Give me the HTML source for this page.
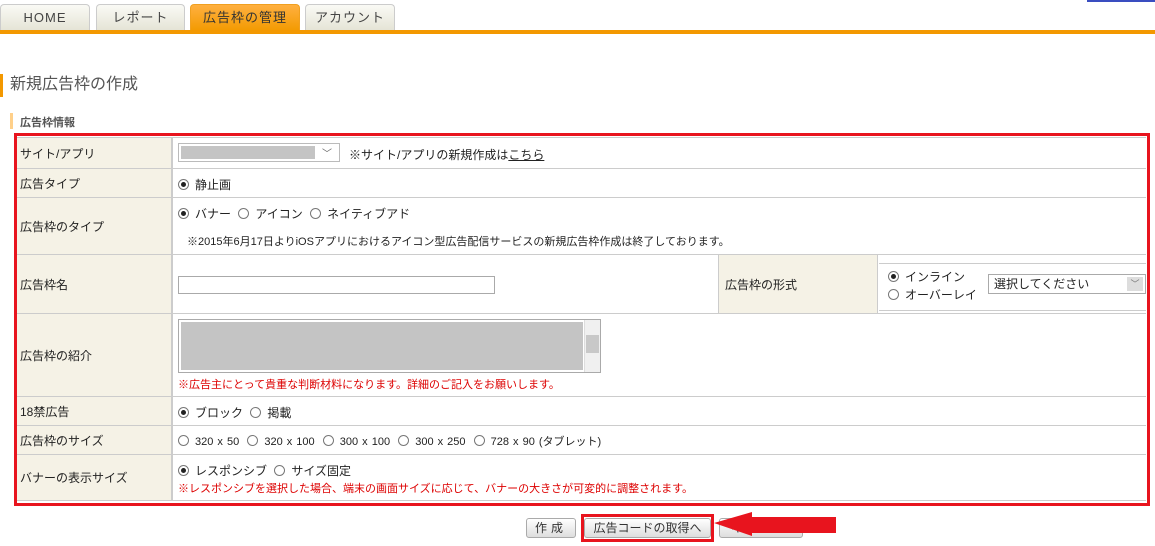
<!DOCTYPE html>
<html><head><meta charset="utf-8"><style>
*{box-sizing:border-box;margin:0;padding:0}
body{width:1155px;height:546px;background:#fff;position:relative;overflow:hidden;font-family:"Liberation Sans","Noto Sans CJK JP",sans-serif;font-size:12px;color:#222}
.a{position:absolute}
.tab{position:absolute;top:4px;height:27px;border:1px solid #ccc;border-bottom:none;border-radius:4px 4px 0 0;background:linear-gradient(#fafaf5,#e4e3d5);text-align:center;line-height:26px;font-size:13px;color:#444;letter-spacing:1px}
.lab{position:absolute;left:17px;width:155px;background:#f5f2e6;border-right:1px solid #ccc;padding-left:3px;display:flex;align-items:center}
.hl{position:absolute;left:17px;width:1129px;height:1px;background:#ccc}
.r{display:inline-block;width:11px;height:11px;border:1px solid #777;border-radius:50%;vertical-align:-1px;margin-right:6px;position:relative;background:#fff}
.r.on::after{content:"";position:absolute;left:2px;top:2px;width:5px;height:5px;border-radius:50%;background:#222}
.red{color:#d00}
.btn{position:absolute;top:518px;height:20px;border:1px solid #aaa;border-radius:3px;background:linear-gradient(#fff,#ddd);text-align:center;line-height:18px;color:#333}
</style></head><body>
<div class="a" style="left:1087px;top:0;width:68px;height:2px;background:#3a4ec0"></div>
<div class="tab" style="left:0;width:90px">HOME</div>
<div class="tab" style="left:96px;width:89px">レポート</div>
<div class="tab" style="left:190px;width:110px;background:linear-gradient(#ffb040,#f39a00);border-color:#f0a020;color:#333">広告枠の管理</div>
<div class="tab" style="left:305px;width:90px">アカウント</div>
<div class="a" style="left:0;top:30px;width:1155px;height:4px;background:#f39800"></div>

<div class="a" style="left:0;top:74px;width:3px;height:23px;background:#f39800"></div>
<div class="a" style="left:10px;top:74px;font-size:16px;color:#555;line-height:22px">新規広告枠の作成</div>
<div class="a" style="left:10px;top:113px;width:3px;height:16px;background:#ffd08a"></div>
<div class="a" style="left:20px;top:114px;font-size:11px;font-weight:bold;color:#555">広告枠情報</div>

<div class="hl" style="top:137px"></div>
<div class="lab" style="top:138px;height:30px">サイト/アプリ</div>
<div class="a" style="left:178px;top:143px;width:162px;height:19px;border:1px solid #bbb;background:#fff"><div style="position:absolute;left:2px;top:2px;width:134px;height:13px;background:#c4c4c4"></div><span style="position:absolute;right:7px;top:1px;color:#666;font-size:10px">﹀</span></div>
<div class="a" style="left:349px;top:146px">※サイト/アプリの新規作成は<u>こちら</u></div>
<div class="hl" style="top:168px"></div>
<div class="lab" style="top:169px;height:28px">広告タイプ</div>
<div class="a" style="left:178px;top:176px"><span class="r on"></span>静止画</div>
<div class="hl" style="top:197px"></div>
<div class="lab" style="top:198px;height:56px">広告枠のタイプ</div>
<div class="a" style="left:178px;top:205px"><span class="r on"></span>バナー <span class="r" style="margin-left:4px"></span>アイコン <span class="r" style="margin-left:4px"></span>ネイティブアド</div>
<div class="a" style="left:187px;top:233px;font-size:11px">※2015年6月17日よりiOSアプリにおけるアイコン型広告配信サービスの新規広告枠作成は終了しております。</div>
<div class="hl" style="top:254px"></div>
<div class="lab" style="top:255px;height:58px">広告枠名</div>
<div class="a" style="left:178px;top:276px;width:317px;height:18px;border:1px solid #aaa"></div>
<div class="lab" style="left:718px;top:255px;height:58px;width:160px;border-left:1px solid #ccc;padding-left:6px">広告枠の形式</div>
<div class="a" style="left:879px;top:263px;width:267px;height:1px;background:#ccc"></div>
<div class="a" style="left:879px;top:310px;width:267px;height:1px;background:#ccc"></div>
<div class="a" style="left:888px;top:268px;line-height:18px"><span class="r on"></span>インライン<br><span class="r"></span>オーバーレイ</div>
<div class="a" style="left:988px;top:274px;width:158px;height:20px;border:1px solid #aaa;padding-left:5px;line-height:18px">選択してください<span style="position:absolute;right:2px;top:2px;width:16px;height:14px;background:#ddd;color:#777;font-size:9px;text-align:center;line-height:14px">﹀</span></div>
<div class="hl" style="top:313px"></div>
<div class="lab" style="top:314px;height:82px">広告枠の紹介</div>
<div class="a" style="left:178px;top:319px;width:423px;height:54px;border:1px solid #aaa;background:#fff"><div style="position:absolute;left:2px;top:2px;width:402px;height:48px;background:#c4c4c4"></div><div style="position:absolute;right:0;top:0;width:16px;height:52px;background:#f0f0f0;border-left:1px solid #ddd"><div style="position:absolute;left:1px;top:15px;width:13px;height:18px;background:#c8c8c8"></div></div></div>
<div class="a red" style="left:178px;top:376px;font-size:11px">※広告主にとって貴重な判断材料になります。詳細のご記入をお願いします。</div>
<div class="hl" style="top:396px"></div>
<div class="lab" style="top:397px;height:28px">18禁広告</div>
<div class="a" style="left:178px;top:404px"><span class="r on"></span>ブロック <span class="r" style="margin-left:4px"></span>掲載</div>
<div class="hl" style="top:425px"></div>
<div class="lab" style="top:426px;height:28px">広告枠のサイズ</div>
<div class="a" style="left:178px;top:433px;font-size:11px;word-spacing:1px"><span class="r"></span>320 x 50 &nbsp;<span class="r"></span>320 x 100 &nbsp;<span class="r"></span>300 x 100 &nbsp;<span class="r"></span>300 x 250 &nbsp;<span class="r"></span>728 x 90 (タブレット)</div>
<div class="hl" style="top:454px"></div>
<div class="lab" style="top:455px;height:45px">バナーの表示サイズ</div>
<div class="a" style="left:178px;top:462px"><span class="r on"></span>レスポンシブ <span class="r" style="margin-left:4px"></span>サイズ固定</div>
<div class="a red" style="left:178px;top:480px;font-size:11px">※レスポンシブを選択した場合、端末の画面サイズに応じて、バナーの大きさが可変的に調整されます。</div>
<div class="hl" style="top:500px"></div>
<div class="a" style="left:172px;top:137px;width:1px;height:363px;background:#ccc"></div>
<div class="a" style="left:14px;top:133px;width:1136px;height:373px;border:3px solid #e8141e"></div>

<div class="btn" style="left:526px;width:50px;letter-spacing:4px">作成</div>
<div class="btn" style="left:584px;width:127px">広告コードの取得へ</div>
<div class="btn" style="left:719px;width:84px">キャンセル</div>
<div class="a" style="left:581px;top:514px;width:133px;height:28px;border:3px solid #e8141e"></div>
<svg class="a" style="left:712px;top:506px" width="128" height="34"><polygon points="2,17 40,6 40,11 124,11 124,27 40,27 40,30" fill="#e8141e"/></svg>
</body></html>
